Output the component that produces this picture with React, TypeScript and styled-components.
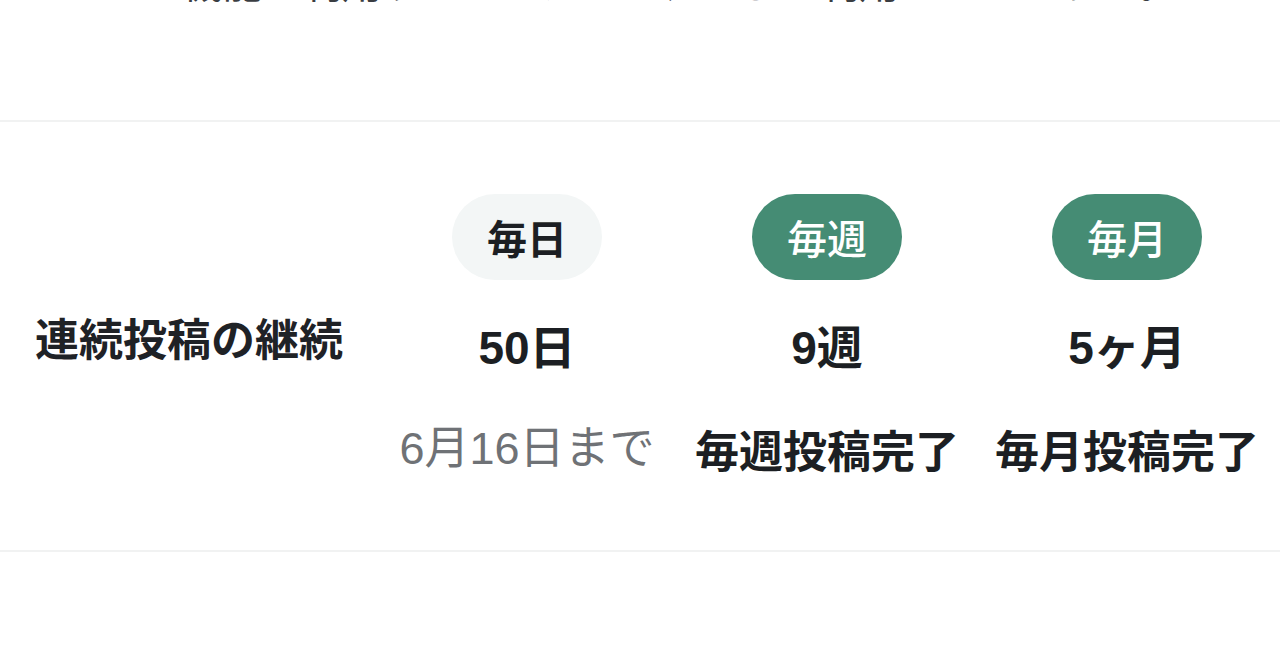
import React from "react";
import styled, { createGlobalStyle } from "styled-components";

const GlobalStyle = createGlobalStyle`
  html, body {
    margin: 0;
    padding: 0;
    background: #ffffff;
  }
  body {
    font-family: "Liberation Sans", "Noto Sans CJK JP", sans-serif;
    color: #1c1f23;
    overflow: hidden;
  }
`;

const Page = styled.div`
  width: 1280px;
  height: 670px;
  overflow: hidden;
  background: #ffffff;
`;

const Intro = styled.p`
  margin: -47px 0 111px 0;
  padding: 0 0 0 22px;
  font-family: "Noto Sans CJK JP", sans-serif;
  font-size: 40px;
  line-height: 56px;
  color: #3a3d42;
  white-space: nowrap;
`;

const Section = styled.section`
  display: grid;
  grid-template-columns: 377px repeat(3, 300px);
  align-items: center;
  padding: 72px 0 71px 0;
  border-top: 2px solid #f1f2f2;
  border-bottom: 2px solid #f1f2f2;
`;

const RowLabel = styled.div`
  padding-left: 35px;
  font-family: "Noto Sans CJK JP", sans-serif;
  font-size: 44px;
  line-height: 60px;
  font-weight: 700;
  color: #1f2226;
  white-space: nowrap;
`;

const Column = styled.div`
  display: flex;
  flex-direction: column;
  align-items: center;
`;

const Pill = styled.div<{ $active: boolean }>`
  display: flex;
  align-items: center;
  justify-content: center;
  width: 150px;
  height: 86px;
  border-radius: 43px;
  background: ${(p) => (p.$active ? "#458c74" : "#f3f6f6")};
  color: ${(p) => (p.$active ? "#ffffff" : "#1c1f23")};
  font-family: "Noto Sans CJK JP", sans-serif;
  font-size: 40px;
  font-weight: ${(p) => (p.$active ? 500 : 700)};
  line-height: 1;
`;

const Value = styled.div`
  margin-top: 38px;
  font-size: 46px;
  line-height: 60px;
  font-weight: 700;
  color: #1c1f23;
  white-space: nowrap;
`;

const Note = styled.div<{ $muted: boolean }>`
  margin-top: 41px;
  font-family: ${(p) =>
    p.$muted
      ? `"Liberation Sans", "Noto Sans CJK JP", sans-serif`
      : `"Noto Sans CJK JP", sans-serif`};
  font-size: ${(p) => (p.$muted ? "45px" : "44px")};
  line-height: 60px;
  font-weight: ${(p) => (p.$muted ? 400 : 700)};
  color: ${(p) => (p.$muted ? "#6f7276" : "#1c1f23")};
  white-space: nowrap;
`;

const columns = [
  { pill: "毎日", active: false, value: "50日", note: "6月16日まで", muted: true },
  { pill: "毎週", active: true, value: "9週", note: "毎週投稿完了", muted: false },
  { pill: "毎月", active: true, value: "5ヶ月", note: "毎月投稿完了", muted: false },
];

export default function App() {
  return (
    <Page>
      <GlobalStyle />
      <Intro>ノートの機能を利用することができ、さらに利用できるように。</Intro>
      <Section>
        <RowLabel>連続投稿の継続</RowLabel>
        {columns.map((c) => (
          <Column key={c.pill}>
            <Pill $active={c.active}>{c.pill}</Pill>
            <Value>{c.value}</Value>
            <Note $muted={c.muted}>{c.note}</Note>
          </Column>
        ))}
      </Section>
    </Page>
  );
}
